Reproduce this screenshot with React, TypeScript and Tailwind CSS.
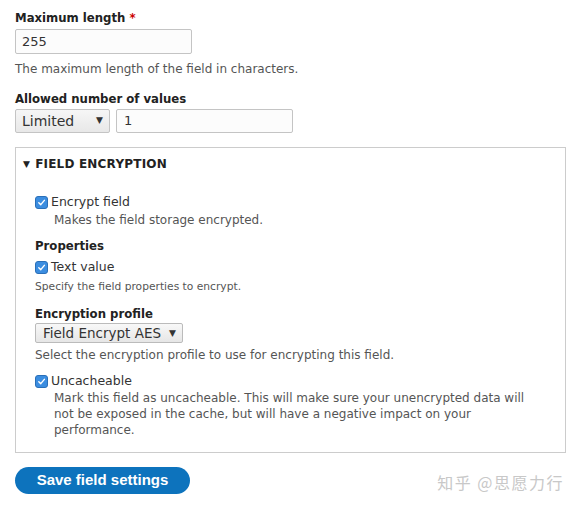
import React from "react";

const font = { fontFamily: '"DejaVu Sans", Verdana, sans-serif' };
const boldFont = { fontFamily: '"DejaVu Sans Condensed", "Noto Sans", sans-serif' };

function Check() {
  return (
    <span className="inline-flex h-[13px] w-[13px] items-center justify-center rounded-[3px] bg-[#3b8de0] border border-[#2a6fb8]">
      <svg width="9" height="9" viewBox="0 0 10 10">
        <path d="M2 5.2 L4.2 7.4 L8.2 2.6" stroke="white" strokeWidth="1.6" fill="none" strokeLinecap="round" strokeLinejoin="round" />
      </svg>
    </span>
  );
}

export default function App() {
  return (
    <div className="w-[579px] h-[509px] bg-white relative text-[#333]" style={font}>
      <div className="pl-[15px] pt-[10px]">
        <div className="text-[13px] font-bold leading-[16px] text-[#222]" style={boldFont}>
          Maximum length <span className="text-[#c00]">*</span>
        </div>
        <div className="mt-[3px] w-[177px] h-[25px] border border-[#c4c4c4] rounded-[2px] bg-[#fcfcfc] pl-[6px] text-[13px] leading-[23px] text-[#333]">
          255
        </div>
        <div className="mt-[8px] text-[12px] leading-[15px] text-[#555]">
          The maximum length of the field in characters.
        </div>
        <div className="mt-[14px] text-[13px] font-bold leading-[16px] text-[#222]" style={boldFont}>
          Allowed number of values
        </div>
        <div className="mt-[2px] flex gap-[6px]">
          <div className="w-[95px] h-[24px] border border-[#c4c4c4] rounded-[2px] bg-gradient-to-b from-[#f6f6f6] to-[#e8e8e8] flex items-center justify-between pl-[6px] pr-[6px] text-[14px] text-[#333]">
            <span>Limited</span>
            <span className="text-[9px]">▼</span>
          </div>
          <div className="w-[177px] h-[24px] border border-[#c4c4c4] rounded-[2px] bg-[#fcfcfc] pl-[7px] text-[13px] leading-[22px]">
            1
          </div>
        </div>
        <div className="mt-[14px] w-[551px] h-[306px] border border-[#ccc] pl-[7px] pt-[8px]">
          <div className="flex items-center text-[12px] font-bold tracking-[0.2px] text-[#222] leading-[16px]">
            <span className="text-[9px] mr-[5px]">▼</span>FIELD ENCRYPTION
          </div>
          <div className="pl-[12px] pt-[22px]">
            <div className="flex items-center gap-[3px] text-[12.5px] leading-[16px]">
              <Check />
              <span>Encrypt field</span>
            </div>
            <div className="pl-[19px] mt-[2px] text-[12px] leading-[16px] text-[#555]">
              Makes the field storage encrypted.
            </div>
            <div className="mt-[10px] text-[13px] font-bold leading-[16px] text-[#222]" style={boldFont}>Properties</div>
            <div className="mt-[5px] flex items-center gap-[3px] text-[12.5px] leading-[16px]">
              <Check />
              <span>Text value</span>
            </div>
            <div className="mt-[5px] text-[10.7px] leading-[14px] text-[#555]">
              Specify the field properties to encrypt.
            </div>
            <div className="mt-[12px] text-[13px] font-bold leading-[16px] text-[#222]" style={boldFont}>Encryption profile</div>
            <div className="mt-[1px] w-[148px] h-[20px] border border-[#bbb] rounded-[2px] bg-gradient-to-b from-[#f8f8f8] to-[#e6e6e6] flex items-center justify-between pl-[7px] pr-[6px] text-[13.5px] leading-[18px] text-[#333]">
              <span>Field Encrypt AES</span>
              <span className="text-[9px]">▼</span>
            </div>
            <div className="mt-[4px] text-[12px] leading-[16px] text-[#555]">
              Select the encryption profile to use for encrypting this field.
            </div>
            <div className="mt-[10px] flex items-center gap-[3px] text-[12.5px] leading-[16px]">
              <Check />
              <span>Uncacheable</span>
            </div>
            <div className="pl-[19px] mt-[1px] w-[492px] text-[12px] leading-[16px] text-[#555]">
              Mark this field as uncacheable. This will make sure your unencrypted data will not be exposed in the cache, but will have a negative impact on your performance.
            </div>
          </div>
        </div>
        <div className="mt-[14px] flex items-center justify-between pr-[15px]">
          <div
            className="w-[175px] h-[27px] rounded-full bg-[#0d73bd] text-white font-bold text-[15px] flex items-center justify-center"
            style={{ fontFamily: '"Liberation Sans", Arial, sans-serif' }}
          >
            Save field settings
          </div>
          <div className="text-[16px] tracking-[1.5px] text-[#c8c8c8] mt-[3px]" style={{ fontFamily: '"Noto Sans CJK SC", sans-serif' }}>
            知乎 @思愿力行
          </div>
        </div>
      </div>
    </div>
  );
}
